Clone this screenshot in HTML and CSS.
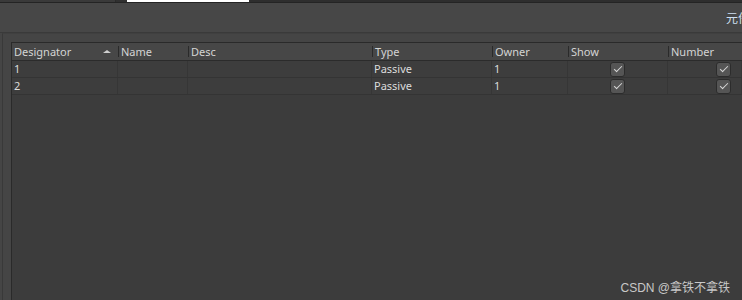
FILE: index.html
```html
<!DOCTYPE html>
<html lang="zh-CN">
<head>
    <meta charset="UTF-8">
    <title>Pins</title>
    <link rel="stylesheet" href="styles.css">
</head>
<body>
    <div class="topbar">
        <div class="tab-dark"></div>
        <div class="tab-mid"></div>
        <div class="tab-light"></div>
    </div>
    <div class="titlebar"><span class="title">元件</span></div>
    <div class="panel">
        <div class="grid">
            <div class="row head">
                <div class="cell first">Designator<span class="sort"></span></div>
                <div class="cell">Name</div>
                <div class="cell">Desc</div>
                <div class="cell">Type</div>
                <div class="cell">Owner</div>
                <div class="cell">Show</div>
                <div class="cell">Number</div>
            </div>
            <div class="row">
                <div class="cell">1</div>
                <div class="cell"></div>
                <div class="cell"></div>
                <div class="cell">Passive</div>
                <div class="cell">1</div>
                <div class="cell check-cell show"><span class="check"></span></div>
                <div class="cell check-cell num"><span class="check"></span></div>
            </div>
            <div class="row">
                <div class="cell">2</div>
                <div class="cell"></div>
                <div class="cell"></div>
                <div class="cell">Passive</div>
                <div class="cell">1</div>
                <div class="cell check-cell show"><span class="check"></span></div>
                <div class="cell check-cell num"><span class="check"></span></div>
            </div>
            <div class="filler"></div>
        </div>
    </div>
    <div class="watermark">CSDN @拿铁不拿铁</div>
</body>
</html>
```

FILE: styles.css
```css
* {
    margin: 0;
    padding: 0;
    box-sizing: border-box;
}

html, body {
    height: 100%;
    overflow: hidden;
}

body {
    font-family: 'Noto Sans', 'Open Sans', 'Noto Sans CJK SC', sans-serif;
    font-size: 11px;
    background: #454545;
    color: #dcdcdc;
    display: flex;
    flex-direction: column;
    position: relative;
}

.topbar {
    height: 3px;
    display: flex;
    border-bottom: 1px solid #242424;
    background: #2e2e2e;
}

.tab-dark {
    width: 116px;
    background: #3a3a3a;
    border-right: 1px solid #2a2a2a;
}

.tab-mid {
    width: 11px;
    background: #303030;
}

.tab-light {
    width: 122px;
    background: #ffffff;
}

.titlebar {
    height: 30px;
    background: #474747;
    display: flex;
    justify-content: flex-end;
    align-items: center;
    overflow: hidden;
    border-bottom: 1px solid #3a3a3a;
}

.title {
    font-size: 12px;
    color: #cfe0f2;
    margin-right: -8px;
    white-space: nowrap;
}

.panel {
    flex: 1;
    margin-left: 2px;
    border-left: 1px solid #393939;
    border-top: 1px solid #404040;
    padding: 8px 0 0 8px;
    background: #454545;
    display: flex;
}

.grid {
    flex: 1;
    border-left: 1px solid #2a2a2a;
    border-top: 1px solid #2a2a2a;
    background: #3d3d3d;
    display: flex;
    flex-direction: column;
}

.row {
    display: grid;
    grid-template-columns: 106px 70px 184px 120px 76px 100px 1fr;
    height: 17px;
    border-bottom: 1px solid #343434;
}

.row .cell {
    border-right: 1px solid #363636;
    padding-left: 2px;
    line-height: 16px;
    white-space: nowrap;
    overflow: hidden;
}

.row.head {
    height: 18px;
    background: #474747;
    border-bottom: 1px solid #2b2b2b;
    color: #d4d4d4;
}

.row.head .cell {
    border-right: none;
    position: relative;
    line-height: 17px;
    padding-left: 3px;
}

.row.head .cell::before {
    content: '';
    position: absolute;
    left: 0;
    top: 3px;
    height: 11px;
    width: 1px;
    background: #2a2a2a;
}

.row.head .cell.first {
    padding-left: 2px;
}

.row.head .cell.first::before {
    display: none;
}

.sort {
    position: absolute;
    left: 91px;
    top: 7px;
    width: 0;
    height: 0;
    border-left: 4px solid transparent;
    border-right: 4px solid transparent;
    border-bottom: 3px solid #cfcfcf;
}

.check-cell {
    display: flex;
    align-items: center;
}

.check-cell.show {
    padding-left: 42px;
}

.check-cell.num {
    padding-left: 48px;
}

.check {
    width: 15px;
    height: 15px;
    border-radius: 3px;
    background: #555555;
    border: 1px solid #2c2c2c;
    position: relative;
}

.check::after {
    content: '';
    position: absolute;
    left: 3px;
    top: 3px;
    width: 7px;
    height: 3px;
    border-left: 1.5px solid #d8d8d8;
    border-bottom: 1.5px solid #d8d8d8;
    transform: rotate(-45deg);
}

.filler {
    flex: 1;
    background: #3c3c3c;
}

.watermark {
    position: absolute;
    right: 12px;
    bottom: 5px;
    font-size: 12px;
    color: #c8c8c8;
    font-family: 'Liberation Sans', 'Noto Sans CJK SC', sans-serif;
}
```
